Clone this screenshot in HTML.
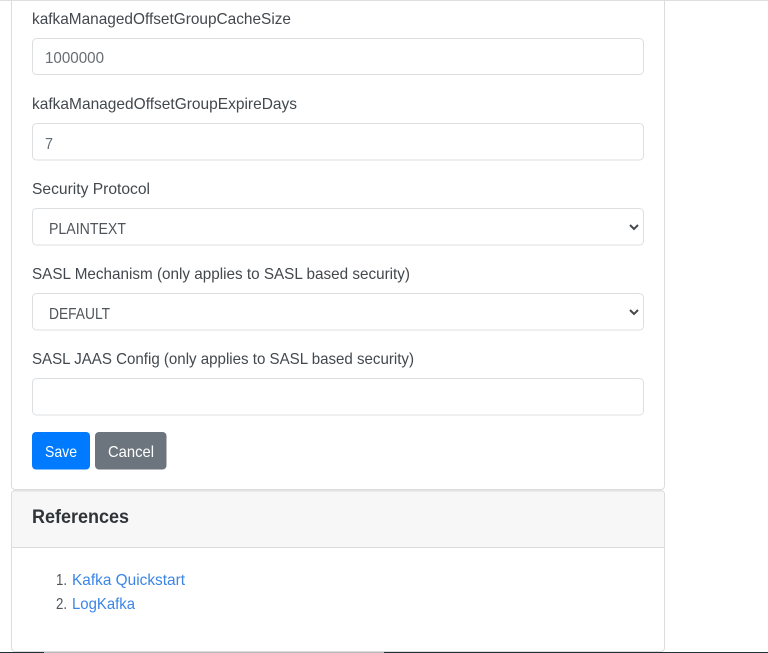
<!DOCTYPE html>
<html lang="en">
<head>
<meta charset="utf-8">
<title>Kafka Settings</title>
<style>
html,body{margin:0;padding:0;background:#fff;width:768px;height:653px;overflow:hidden}
svg{display:block}
text{font-family:"Liberation Sans",sans-serif;font-size:16px}
.l{fill:#42484e}
.v{fill:#666d73}
.s{fill:#4f555b}
.a{fill:#3a85e6}
</style>
</head>
<body>
<svg width="768" height="653" viewBox="0 0 768 653" xmlns="http://www.w3.org/2000/svg">

<!-- first card -->
<path d="M11.5 0V486a3.5 3.5 0 0 0 3.5 3.5H661a3.5 3.5 0 0 0 3.5-3.5V0" fill="#fff" stroke="#dcdcdc"/>
<rect x="13" y="490" width="650" height="1" fill="#ececec"/>
<rect x="0" y="0" width="768" height="1" fill="#dedede"/>

<!-- fields -->
<g fill="#fff" stroke="#dcdfe2">
<rect x="32.5" y="38.5" width="611" height="36" rx="4"/>
<rect x="32.5" y="123.5" width="611" height="36.500" rx="4"/>
<rect x="32.5" y="208.500" width="611" height="36.500" rx="4"/>
<rect x="32.5" y="293.500" width="611" height="36.500" rx="4"/>
<rect x="32.5" y="378.500" width="611" height="36.500" rx="4"/>
</g>

<text x="32" y="24" class="l" textLength="259" lengthAdjust="spacingAndGlyphs">kafkaManagedOffsetGroupCacheSize</text>
<text x="45" y="63" class="v" textLength="59" lengthAdjust="spacingAndGlyphs">1000000</text>
<text x="32" y="109" class="l" textLength="265" lengthAdjust="spacingAndGlyphs">kafkaManagedOffsetGroupExpireDays</text>
<text x="45" y="149" class="v" textLength="8" lengthAdjust="spacingAndGlyphs">7</text>
<text x="32" y="194" class="l" textLength="118" lengthAdjust="spacingAndGlyphs">Security Protocol</text>
<text x="49" y="234" class="s" textLength="77" lengthAdjust="spacingAndGlyphs">PLAINTEXT</text>
<text x="32" y="279" class="l" textLength="378" lengthAdjust="spacingAndGlyphs">SASL Mechanism (only applies to SASL based security)</text>
<text x="49" y="319" class="s" textLength="61" lengthAdjust="spacingAndGlyphs">DEFAULT</text>
<text x="32" y="364" class="l" textLength="382" lengthAdjust="spacingAndGlyphs">SASL JAAS Config (only applies to SASL based security)</text>

<!-- select chevrons -->
<path d="M630 225l4 4 4-4" fill="none" stroke="#43484d" stroke-width="2"/>
<path d="M630 310l4 4 4-4" fill="none" stroke="#43484d" stroke-width="2"/>

<!-- buttons -->
<rect x="32" y="432" width="58" height="37.500" rx="4" fill="#007bff"/>
<rect x="95" y="432" width="71.500" height="37.500" rx="4" fill="#6c757d"/>
<text x="45" y="457" fill="#fff" textLength="32" lengthAdjust="spacingAndGlyphs">Save</text>
<text x="108" y="457" fill="#fff" textLength="46" lengthAdjust="spacingAndGlyphs">Cancel</text>

<!-- references card -->
<path d="M11.500 648V494a3 3 0 0 1 3-3H661.500a3 3 0 0 1 3 3V648a3.500 3.500 0 0 1-3.500 3.500H15a3.500 3.500 0 0 1-3.500-3.500Z" fill="#fff" stroke="#dcdcdc"/>
<path d="M12 547V494a2.500 2.500 0 0 1 2.500-2.500H661.500a2.500 2.500 0 0 1 2.500 2.500V547Z" fill="#f7f7f7"/>
<rect x="12" y="547" width="652" height="1" fill="#dcdcdc"/>
<text x="32" y="523" fill="#2f3439" style="font-size:19px;font-weight:bold" textLength="97" lengthAdjust="spacingAndGlyphs">References</text>

<text x="56" y="585" class="s" textLength="11" lengthAdjust="spacingAndGlyphs">1.</text>
<text x="72" y="585" class="a" textLength="113" lengthAdjust="spacingAndGlyphs">Kafka Quickstart</text>
<text x="56" y="609" class="s" textLength="11" lengthAdjust="spacingAndGlyphs">2.</text>
<text x="72" y="609" class="a" textLength="63" lengthAdjust="spacingAndGlyphs">LogKafka</text>

<!-- bottom strip -->
<rect x="0" y="652" width="44" height="1" fill="#1f3038"/>
<rect x="44" y="652" width="340" height="1" fill="#b9b9b9"/>
<rect x="384" y="652" width="384" height="1" fill="#1f3038"/>
</svg>
</body>
</html>
